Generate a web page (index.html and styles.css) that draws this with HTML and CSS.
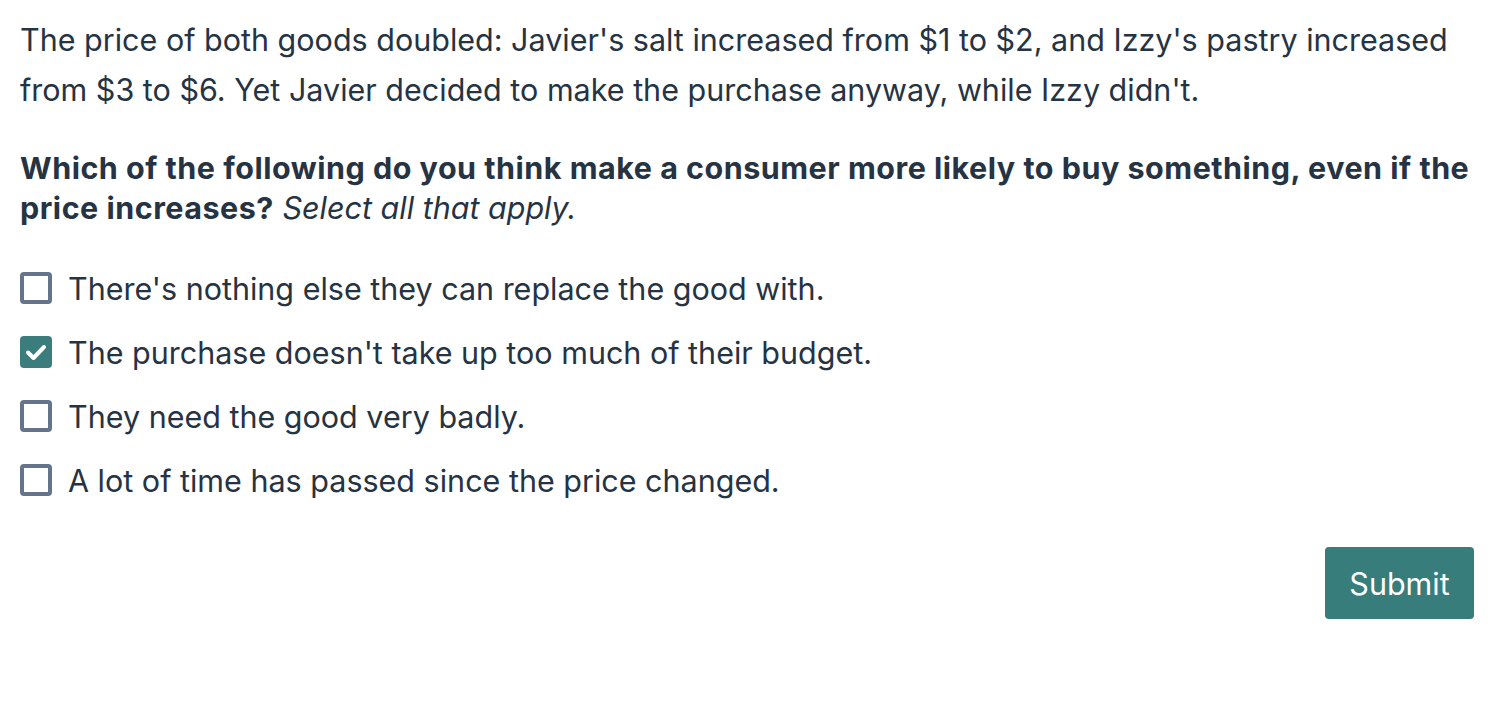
FILE: index.html
```html
<!DOCTYPE html>
<html>
<head>
<meta charset="utf-8">
<link rel="stylesheet" href="styles.css">
</head>
<body>
<div class="page">
  <p class="intro">The price of both goods doubled: Javier's salt increased from $1 to $2, and Izzy's pastry increased from $3 to $6. Yet Javier decided to make the purchase anyway, while Izzy didn't.</p>
  <p class="question"><strong>Which of the following do you think make a consumer more likely to buy something, even if the price increases?</strong> <em>Select all that apply.</em></p>
  <ul class="options">
    <li class="option"><span class="box"></span><span class="label">There's nothing else they can replace the good with.</span></li>
    <li class="option"><span class="box checked"><svg viewBox="0 0 32 32" width="32" height="32"><path d="M8 16.5 L13.5 22 L24 11" fill="none" stroke="#fff" stroke-width="4" stroke-linecap="round" stroke-linejoin="round"/></svg></span><span class="label">The purchase doesn't take up too much of their budget.</span></li>
    <li class="option"><span class="box"></span><span class="label">They need the good very badly.</span></li>
    <li class="option"><span class="box"></span><span class="label">A lot of time has passed since the price changed.</span></li>
  </ul>
  <div class="actions"><button class="submit">Submit</button></div>
</div>
</body>
</html>
```
FILE: styles.css
```css
html, body { margin: 0; padding: 0; background: #fff; }
body { font-family: Inter, "Noto Sans", sans-serif; color: #253342; }
.page { padding: 15px 36px 0 20px; }
.intro { margin: 0; font-size: 30.5px; line-height: 50px; }
.question { margin: 33px 0 0 0; font-size: 30.5px; line-height: 40px; }
.question strong { font-weight: 700; letter-spacing: 0.5px; }
.question em { font-style: italic; }
.options { list-style: none; margin: 40px 0 0 0; padding: 0; display: flex; flex-direction: column; gap: 24px; }
.option { display: flex; align-items: center; gap: 16px; height: 40px; font-size: 30.5px; }
.box { width: 32px; height: 32px; box-sizing: border-box; border: 4px solid #64748b; border-radius: 4px; flex: none; }
.box.checked { background: #3a7d7c; border: none; display: flex; }
.actions { display: flex; justify-content: flex-end; margin-top: 47px; }
.submit { background: #377d7b; color: #fff; border: none; border-radius: 4px; font-family: Inter, sans-serif; font-size: 30.5px; width: 149px; height: 72px; padding: 0; }
```
